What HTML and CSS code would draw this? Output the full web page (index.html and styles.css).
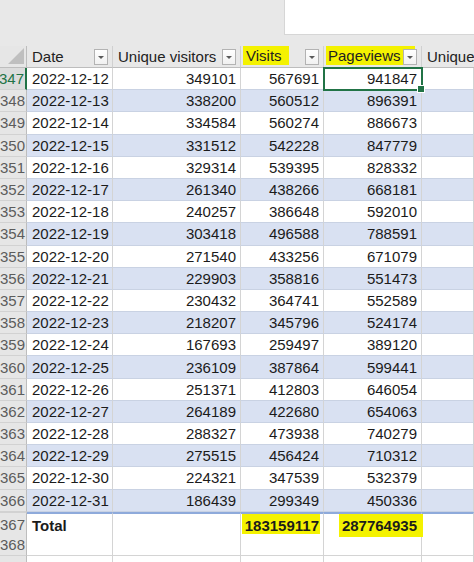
FILE: index.html
```html
<!DOCTYPE html>
<html>
<head>
<meta charset="utf-8">
<link rel="stylesheet" href="styles.css">
</head>
<body>
<div class="top"><div class="namebox"></div></div>
<div class="sheet">
  <div class="row head">
    <div class="rh corner"><svg width="16" height="16" viewBox="0 0 16 16"><polygon points="16,0 16,16 0,16" fill="#bfbfbf"/></svg></div>
    <div class="ch"><span class="lbl">Date</span><span class="dd"></span></div>
    <div class="ch"><span class="lbl">Unique visitors</span><span class="dd"></span></div>
    <div class="ch"><span class="lbl hl hl-visits">Visits</span><span class="dd"></span></div>
    <div class="ch sel-col"><span class="lbl hl hl-pv">Pageviews</span><span class="dd"></span></div>
    <div class="ch last"><span class="lbl">Unique</span></div>
  </div>

  <div class="row"><div class="rh sel-row">347</div><div class="c">2022-12-12</div><div class="c n">349101</div><div class="c n">567691</div><div class="c n sel">941847</div><div class="c"></div></div>
  <div class="row band"><div class="rh">348</div><div class="c">2022-12-13</div><div class="c n">338200</div><div class="c n">560512</div><div class="c n">896391</div><div class="c"></div></div>
  <div class="row"><div class="rh">349</div><div class="c">2022-12-14</div><div class="c n">334584</div><div class="c n">560274</div><div class="c n">886673</div><div class="c"></div></div>
  <div class="row band"><div class="rh">350</div><div class="c">2022-12-15</div><div class="c n">331512</div><div class="c n">542228</div><div class="c n">847779</div><div class="c"></div></div>
  <div class="row"><div class="rh">351</div><div class="c">2022-12-16</div><div class="c n">329314</div><div class="c n">539395</div><div class="c n">828332</div><div class="c"></div></div>
  <div class="row band"><div class="rh">352</div><div class="c">2022-12-17</div><div class="c n">261340</div><div class="c n">438266</div><div class="c n">668181</div><div class="c"></div></div>
  <div class="row"><div class="rh">353</div><div class="c">2022-12-18</div><div class="c n">240257</div><div class="c n">386648</div><div class="c n">592010</div><div class="c"></div></div>
  <div class="row band"><div class="rh">354</div><div class="c">2022-12-19</div><div class="c n">303418</div><div class="c n">496588</div><div class="c n">788591</div><div class="c"></div></div>
  <div class="row"><div class="rh">355</div><div class="c">2022-12-20</div><div class="c n">271540</div><div class="c n">433256</div><div class="c n">671079</div><div class="c"></div></div>
  <div class="row band"><div class="rh">356</div><div class="c">2022-12-21</div><div class="c n">229903</div><div class="c n">358816</div><div class="c n">551473</div><div class="c"></div></div>
  <div class="row"><div class="rh">357</div><div class="c">2022-12-22</div><div class="c n">230432</div><div class="c n">364741</div><div class="c n">552589</div><div class="c"></div></div>
  <div class="row band"><div class="rh">358</div><div class="c">2022-12-23</div><div class="c n">218207</div><div class="c n">345796</div><div class="c n">524174</div><div class="c"></div></div>
  <div class="row"><div class="rh">359</div><div class="c">2022-12-24</div><div class="c n">167693</div><div class="c n">259497</div><div class="c n">389120</div><div class="c"></div></div>
  <div class="row band"><div class="rh">360</div><div class="c">2022-12-25</div><div class="c n">236109</div><div class="c n">387864</div><div class="c n">599441</div><div class="c"></div></div>
  <div class="row"><div class="rh">361</div><div class="c">2022-12-26</div><div class="c n">251371</div><div class="c n">412803</div><div class="c n">646054</div><div class="c"></div></div>
  <div class="row band"><div class="rh">362</div><div class="c">2022-12-27</div><div class="c n">264189</div><div class="c n">422680</div><div class="c n">654063</div><div class="c"></div></div>
  <div class="row"><div class="rh">363</div><div class="c">2022-12-28</div><div class="c n">288327</div><div class="c n">473938</div><div class="c n">740279</div><div class="c"></div></div>
  <div class="row band"><div class="rh">364</div><div class="c">2022-12-29</div><div class="c n">275515</div><div class="c n">456424</div><div class="c n">710312</div><div class="c"></div></div>
  <div class="row"><div class="rh">365</div><div class="c">2022-12-30</div><div class="c n">224321</div><div class="c n">347539</div><div class="c n">532379</div><div class="c"></div></div>
  <div class="row band"><div class="rh">366</div><div class="c">2022-12-31</div><div class="c n">186439</div><div class="c n">299349</div><div class="c n">450336</div><div class="c"></div></div>
  <div class="row total"><div class="rh">367</div><div class="c b">Total</div><div class="c"></div><div class="c n b"><span class="hl hl-t1">183159117</span></div><div class="c n b"><span class="hl hl-t2">287764935</span></div><div class="c"></div></div>
  <div class="row plain"><div class="rh">368</div><div class="c"></div><div class="c"></div><div class="c"></div><div class="c"></div><div class="c"></div></div>
  <div class="row plain"><div class="rh"></div><div class="c"></div><div class="c"></div><div class="c"></div><div class="c"></div><div class="c"></div></div>
</div>
</body>
</html>
```

FILE: styles.css
```css
* { box-sizing: border-box; }
html, body {
  margin: 0;
  padding: 0;
  width: 474px;
  height: 562px;
  overflow: hidden;
  background: #ffffff;
  font-family: "Liberation Sans", Arial, sans-serif;
  font-size: 15px;
  color: #1b1b1b;
}
.top {
  height: 46px;
  background: #e8e8e8;
  display: flex;
  justify-content: flex-end;
}
.namebox {
  width: 190px;
  height: 35px;
  background: #ffffff;
  border-left: 1px solid #d6d6d6;
  border-bottom: 1px solid #d6d6d6;
}
.sheet {
  display: flex;
  flex-direction: column;
}
.row {
  display: grid;
  grid-template-columns: 27px 86px 128px 83px 98px 52px;
  height: 22.2px;
  flex: none;
}
.row.head {
  height: 22px;
  background: #e8e8e8;
}
.rh {
  background: #e6e6e6;
  border-right: 1px solid #bdbdbd;
  border-bottom: 1px solid #d2d2d2;
  color: #5c5c5c;
  display: flex;
  align-items: center;
  justify-content: flex-end;
  padding-right: 1px;
  overflow: hidden;
  white-space: nowrap;
}
.rh.corner {
  border-bottom: 1px solid #bdbdbd;
  align-items: flex-end;
  padding: 0 2px 3px 0;
}
.rh.sel-row {
  color: #217346;
  background: #dcdcdc;
  border-right: 2px solid #217346;
}
.ch {
  display: flex;
  align-items: center;
  justify-content: space-between;
  padding-left: 5px;
  border-right: 1px solid #d0d0d0;
  border-bottom: 1px solid #bdbdbd;
  white-space: nowrap;
  overflow: hidden;
  color: #222;
}
.ch.last { border-right: none; }
.ch.sel-col { border-bottom: 1px solid #cfcfcf; }
.lbl { line-height: 17px; }
.dd {
  width: 14px;
  height: 16px;
  margin-right: 4px;
  flex: none;
  border: 1px solid #b3b3b3;
  background: linear-gradient(#ffffff, #f1f1f1);
  position: relative;
}
.dd::after {
  content: "";
  position: absolute;
  left: 3px;
  top: 6px;
  border-left: 3px solid transparent;
  border-right: 3px solid transparent;
  border-top: 3px solid #5a5a5a;
}
.c {
  display: flex;
  align-items: center;
  padding: 0 5px;
  border-right: 1px solid #d4d4d4;
  border-bottom: 1px solid #c9d2e3;
  white-space: nowrap;
  background: #ffffff;
}
.c.n { justify-content: flex-end; padding-right: 4px; }
.band .c { background: #d9e1f2; }
.b { font-weight: bold; }
.total .c { border-top: 2px solid #8eaadb; border-bottom: 1px solid #d4d4d4; }
.total .rh { border-top: 1px solid #d2d2d2; }
.plain .c { border-bottom: 1px solid #d4d4d4; }
.sel {
  position: relative;
  outline: 2px solid #217346;
  outline-offset: -1px;
}
.sel::after {
  content: "";
  position: absolute;
  right: -4px;
  bottom: -4px;
  width: 6px;
  height: 6px;
  background: #217346;
  border: 1px solid #ffffff;
}
.hl { background: #f4f200; }
.hl-visits {
  margin-left: -3px;
  padding: 4px 7px 1px 3px;
  margin-top: -5px;
}
.hl-pv {
  margin-left: -3px;
  padding: 2px 14px 1px 2px;
  margin-right: -12px;
  margin-top: -3px;
}
.hl-t1 {
  padding: 3px 1px 3px 3px;
  margin-right: -1px;
}
.hl-t2 {
  padding: 3px 6px 3px 3px;
  margin-right: -6px;
  position: relative;
  z-index: 1;
}
```
